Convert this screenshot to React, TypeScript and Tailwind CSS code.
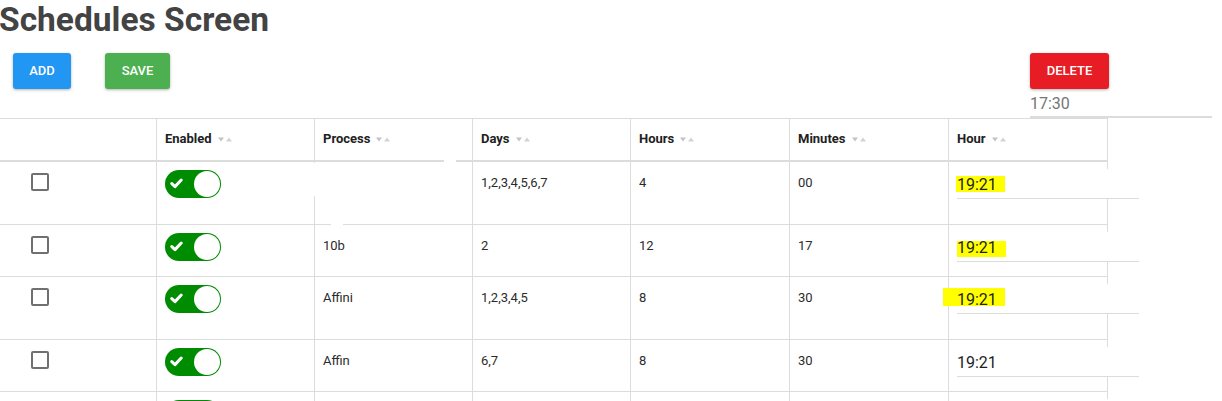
import React from "react";

interface Schedule {
  process: string;
  days: string;
  hours: string;
  minutes: string;
  hour: string;
  tall: boolean;
  mark?: string;
}

const schedules: Schedule[] = [
  { process: "", days: "1,2,3,4,5,6,7", hours: "4", minutes: "00", hour: "19:21", tall: true, mark: "-left-px top-[7px] w-[49px] h-[16px]" },
  { process: "10b", days: "2", hours: "12", minutes: "17", hour: "19:21", tall: false, mark: "left-0 top-[9px] w-[49px] h-[16px]" },
  { process: "Affini", days: "1,2,3,4,5", hours: "8", minutes: "30", hour: "19:21", tall: true, mark: "-left-[14px] top-[4px] w-[62px] h-[18px]" },
  { process: "Affin", days: "6,7", hours: "8", minutes: "30", hour: "19:21", tall: false },
  // next row only shows the top edge of its toggle
  { process: "", days: "", hours: "", minutes: "", hour: "", tall: true },
];

const headers = ["Enabled", "Process", "Days", "Hours", "Minutes", "Hour"];

const cols = "grid grid-cols-[156px_158px_158px_158px_159px_159px_160px]";

const SortArrows: React.FC = () => (
  <svg width="14" height="5" viewBox="0 0 14 5" className="ml-[6px] mt-[2px]">
    <polygon points="0,0.5 6,0.5 3,4.5" fill="#c4c4c4" />
    <polygon points="8,4.5 14,4.5 11,0.5" fill="#d2d2d2" />
  </svg>
);

const Toggle: React.FC = () => (
  <div className="relative w-[56px] h-[28px] rounded-full bg-[#008c00]">
    <svg width="13" height="11" viewBox="0 0 13 11" className="absolute left-[5px] top-[8px]">
      <path d="M1.8 5.6 L5 8.6 L11.2 2" fill="none" stroke="#fff" strokeWidth="3" strokeLinecap="round" strokeLinejoin="round" />
    </svg>
    <div className="absolute right-px top-px w-[26px] h-[26px] rounded-full bg-white" />
  </div>
);

const App: React.FC = () => {
  return (
    <div className="font-['Roboto',sans-serif] bg-white min-h-screen overflow-hidden">
      <h1 className="-ml-[1px] text-[33.5px] leading-[40px] font-bold text-[#434343]">
        Schedules Screen
      </h1>

      <div className="mt-[13px] w-[1212px] flex justify-between items-start">
        <div className="flex gap-[34px] pl-[13px]">
          <button className="w-[58px] h-[36px] rounded-[3px] bg-[#2196f3] text-white text-[13px] font-medium shadow-[0_1px_3px_rgba(0,0,0,0.3)]">
            ADD
          </button>
          <button className="w-[65px] h-[36px] rounded-[3px] bg-[#4caf50] text-white text-[13px] font-medium shadow-[0_1px_3px_rgba(0,0,0,0.3)]">
            SAVE
          </button>
        </div>
        <div className="w-[182px] flex flex-col">
          <button className="w-[79px] h-[36px] rounded-[3px] bg-[#e81c24] text-white text-[13px] font-medium shadow-[0_1px_3px_rgba(0,0,0,0.3)]">
            DELETE
          </button>
          <div className="h-[29px] pt-[5px] border-b-2 border-[#dcdcdc] text-[16px] leading-[19px] text-[#757575]">
            17:30
          </div>
        </div>
      </div>

      <div className="w-[1108px]">
        <div className={`${cols} h-[44px] border-t border-b-2 border-[#dcdcdc]`}>
          <div />
          {headers.map((h, i) => (
            <div
              key={h}
              className={`relative flex items-center pl-[8px] pb-[2px] border-l border-[#dcdcdc] text-[13px] font-bold text-[#212121] ${i === headers.length - 1 ? "border-r" : ""}`}
            >
              {h}
              <SortArrows />
              {h === "Process" && (
                <div className="absolute left-[129px] -bottom-[2px] w-[12px] h-[2px] bg-white" />
              )}
            </div>
          ))}
        </div>

        {schedules.map((s, idx) => (
          <div
            key={idx}
            className={`${cols} ${s.tall ? "h-[63px]" : "h-[52px]"} border-b border-[#dcdcdc] text-[13px] leading-[15px] text-[#2b2b2b]`}
          >
            <div className="pl-[31px] pt-[11px]">
              <div className="w-[18px] h-[18px] border-2 border-[#707070] rounded-[2px]" />
            </div>
            <div className="pl-[8px] pt-[8px] border-l border-[#dcdcdc]">
              <Toggle />
            </div>
            <div className="relative pl-[8px] pt-[13px] border-l border-[#dcdcdc]">
              {s.process}
              {idx === 0 && (
                <>
                  <div className="absolute -left-px top-px w-[3px] h-[33px] bg-white" />
                  <div className="absolute left-[16px] -bottom-px w-[12px] h-px bg-white" />
                </>
              )}
            </div>
            <div className="pl-[8px] pt-[13px] border-l border-[#dcdcdc]">{s.days}</div>
            <div className="pl-[8px] pt-[13px] border-l border-[#dcdcdc]">{s.hours}</div>
            <div className="pl-[8px] pt-[13px] border-l border-[#dcdcdc]">{s.minutes}</div>
            <div className="pl-[8px] pt-[7px] border-l border-r border-[#dcdcdc]">
              <div className="relative w-[182px] h-[30px] bg-white border-b border-[#dcdcdc]">
                {s.mark && <span className={`absolute bg-[#ffff00] ${s.mark}`} />}
                <span className="relative block pt-[6px] text-[16px] leading-[19px] text-[#1e1e1e]">
                  {s.hour}
                </span>
              </div>
            </div>
          </div>
        ))}
      </div>
    </div>
  );
};

export default App;
